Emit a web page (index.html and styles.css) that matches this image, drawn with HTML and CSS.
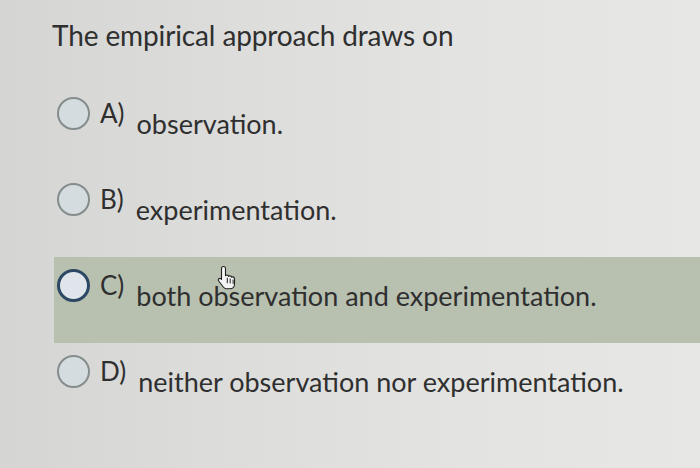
FILE: index.html
```html
<!DOCTYPE html>
<html>
<head>
<meta charset="utf-8">
<link rel="stylesheet" href="styles.css">
</head>
<body>
<div class="page">
  <div class="question">The empirical approach draws on</div>
  <div class="answers">
    <div class="answer">
      <span class="radio"></span>
      <span class="label">A)</span>
      <span class="text">observation.</span>
    </div>
    <div class="answer">
      <span class="radio"></span>
      <span class="label">B)</span>
      <span class="text">experimentation.</span>
    </div>
    <div class="answer hover">
      <span class="radio focus"></span>
      <span class="label">C)</span>
      <span class="text">both observation and experimentation.</span>
      <svg class="cursor" width="22" height="26" viewBox="0 0 22 26">
        <path d="M6.5 1.5c1.2 0 2 .8 2 2v7.2c.4-.5 1-.7 1.600-.6.9.1 1.4.7 1.5 1.3.4-.4 1-.6 1.6-.5.8.1 1.3.7 1.4 1.3.4-.3.9-.4 1.4-.3 1 .2 1.5 1 1.5 2v5.4c0 2.6-2 4.5-4.6 4.5H9.8c-1.5 0-2.6-.6-3.5-1.8L1.7 16c-.6-.8-.5-1.8.2-2.3.7-.5 1.6-.4 2.2.3l.4.5V3.5c0-1.2.8-2 2-2z" fill="#f4f4f4" stroke="#222" stroke-width="1.1" stroke-linejoin="round"/>
        <path d="M10.3 13.2v4.6M13.2 14v4M16.1 15v3.5" stroke="#222" stroke-width="1" fill="none" stroke-linecap="round"/>
      </svg>
    </div>
    <div class="answer">
      <span class="radio"></span>
      <span class="label">D)</span>
      <span class="text">neither observation nor experimentation.</span>
    </div>
  </div>
</div>
</body>
</html>
```
FILE: styles.css
```css
html, body {
  margin: 0;
  padding: 0;
}
body {
  width: 700px;
  height: 468px;
  overflow: hidden;
  font-family: Lato, "Open Sans", sans-serif;
  color: #2f2f2f;
  background: linear-gradient(90deg, #d5d5d4 0%, #dcdcdb 30%, #e3e3e1 65%, #e7e7e5 100%);
}
.page {
  padding: 18px 0 0 52px;
}
.question {
  font-size: 28px;
  line-height: 34px;
  letter-spacing: -0.12px;
}
.answers {
  margin-top: 33px;
  display: flex;
  flex-direction: column;
}
.answer {
  position: relative;
  height: 86px;
  display: flex;
  align-items: flex-start;
  padding: 12px 0 0 3px;
  box-sizing: border-box;
  margin-left: 2px;
}
.answer.hover {
  background: #b8c0b0;
}
.radio {
  width: 33px;
  height: 33px;
  border-radius: 50%;
  border: 2px solid #858c8c;
  background: #d4dcdf;
  box-sizing: border-box;
  flex: none;
}
.radio.focus {
  border: 3px solid #2d4864;
  background: #dfe5ea;
}
.label {
  font-size: 26px;
  line-height: 30px;
  margin-left: 10px;
  margin-top: 1px;
  flex: none;
}
.text {
  font-size: 27px;
  line-height: 30px;
  margin-left: 12px;
  margin-top: 12px;
}
.cursor {
  position: absolute;
  left: 163px;
  top: 8px;
}
```
